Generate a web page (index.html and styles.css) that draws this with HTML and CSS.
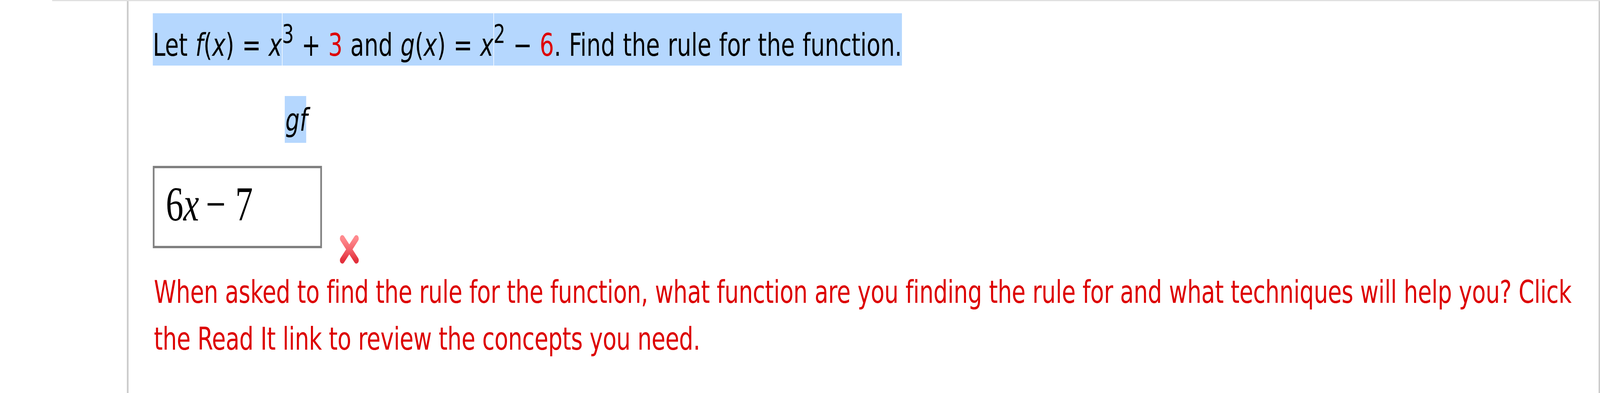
FILE: index.html
```html
<!DOCTYPE html>
<html lang="en">

<head>
    <meta charset="UTF-8">
    <title>composite function</title>
    <link rel="stylesheet" href="styles.css">
</head>

<body>
    <div class="page" id="page">
        <div class="topline"></div>
        <div class="panel">
            <div class="question"><span class="seg">Let <i>f</i>(<i>x</i>) = <i>x</i></span><span class="seg"><sup>3</sup> + <span class="red">3</span> and <i>g</i>(<i>x</i>) = <i>x</i></span><span class="seg"><sup>2</sup> − <span class="red">6</span>. Find the rule for the function.</span></div>

            <div class="prompt"><span class="hl"><i>gf</i></span></div>

            <div class="answer-row">
                <div class="answer-box"><span class="num">6</span><i>x</i><span class="minus">−</span><span class="num">7</span></div>
                <svg class="mark" width="78" height="82" viewBox="0 0 78 82">
                    <defs>
                        <linearGradient id="xg" x1="0" y1="0" x2="0" y2="1">
                            <stop offset="0" stop-color="#ff8a8e"/>
                            <stop offset="0.5" stop-color="#f4646c"/>
                            <stop offset="1" stop-color="#e2303c"/>
                        </linearGradient>
                    </defs>
                    <g stroke="url(#xg)" stroke-width="17" stroke-linecap="round">
                        <line x1="14" y1="13" x2="64" y2="69"/>
                        <line x1="64" y1="13" x2="14" y2="69"/>
                    </g>
                </svg>
            </div>

            <p class="feedback">When asked to find the rule for the function, what function are you finding the rule for and what techniques will help you? Click the Read It link to review the concepts you need.</p>
        </div>
    </div>
    <script type="text/javascript">
    // the page is laid out for a 5675px wide window; squeeze it sideways if the window is narrower
    function fitPage() {
        var page = document.getElementById('page');
        var s = window.innerWidth / 5675;
        page.style.transform = s < 1 ? 'scaleX(' + s + ')' : '';
    }
    fitPage();
    window.onresize = fitPage;
    </script>
</body>

</html>
```

FILE: styles.css
```css
* {
    margin: 0;
    padding: 0;
}

html,
body {
    overflow: hidden;
}

body {
    background: #fff;
    font-family: "DejaVu Sans", Verdana, sans-serif;
    font-size: 80px;
    color: #000;
}

.page {
    width: 5675px;
    height: 1007px;
    transform-origin: 0 0;
}

.topline {
    margin-left: 185px;
    height: 3px;
    background-color: #e0e0e0;
}

.panel {
    margin-left: 450px;
    height: 1004px;
    border-left: 6px solid #cbcbcb;
    border-right: 5px solid #cbcbcb;
    padding: 31px 0 0 86px;
    box-sizing: border-box;
}

.question {
    height: 134px;
    white-space: nowrap;
    word-spacing: 2px;
}

.seg {
    display: inline-block;
    height: 134px;
    line-height: 93px;
    padding-top: 35px;
    box-sizing: border-box;
    vertical-align: top;
    background-color: #b5d7fe;
}

.seg + .seg {
    box-shadow: inset 2px 0 0 #fff;
}

sup {
    font-size: 66px;
    line-height: 0;
    vertical-align: 33px;
}

.red {
    color: #dd0000;
}

.prompt {
    margin-top: 78px;
    padding-left: 468px;
    height: 120px;
}

.hl {
    display: inline-block;
    width: 76px;
    height: 120px;
    line-height: 117px;
    padding: 3px 0 0 2px;
    box-sizing: border-box;
    white-space: nowrap;
    background-color: #b5d7fe;
}

.answer-row {
    display: flex;
    align-items: flex-start;
    margin-top: 59px;
}

.answer-box {
    width: 600px;
    height: 211px;
    border: 6px solid #808080;
    box-sizing: border-box;
    padding: 23px 0 0 40px;
    font-family: "Liberation Serif", "Times New Roman", serif;
    font-size: 125px;
    line-height: 138px;
    white-space: nowrap;
}

.minus {
    margin: 0 34px 0 24px;
}

.mark {
    margin: 173px 0 0 58px;
}

.feedback {
    margin: 9px 0 0 4px;
    color: #dd0000;
    line-height: 120px;
    letter-spacing: -0.6px;
}
```
